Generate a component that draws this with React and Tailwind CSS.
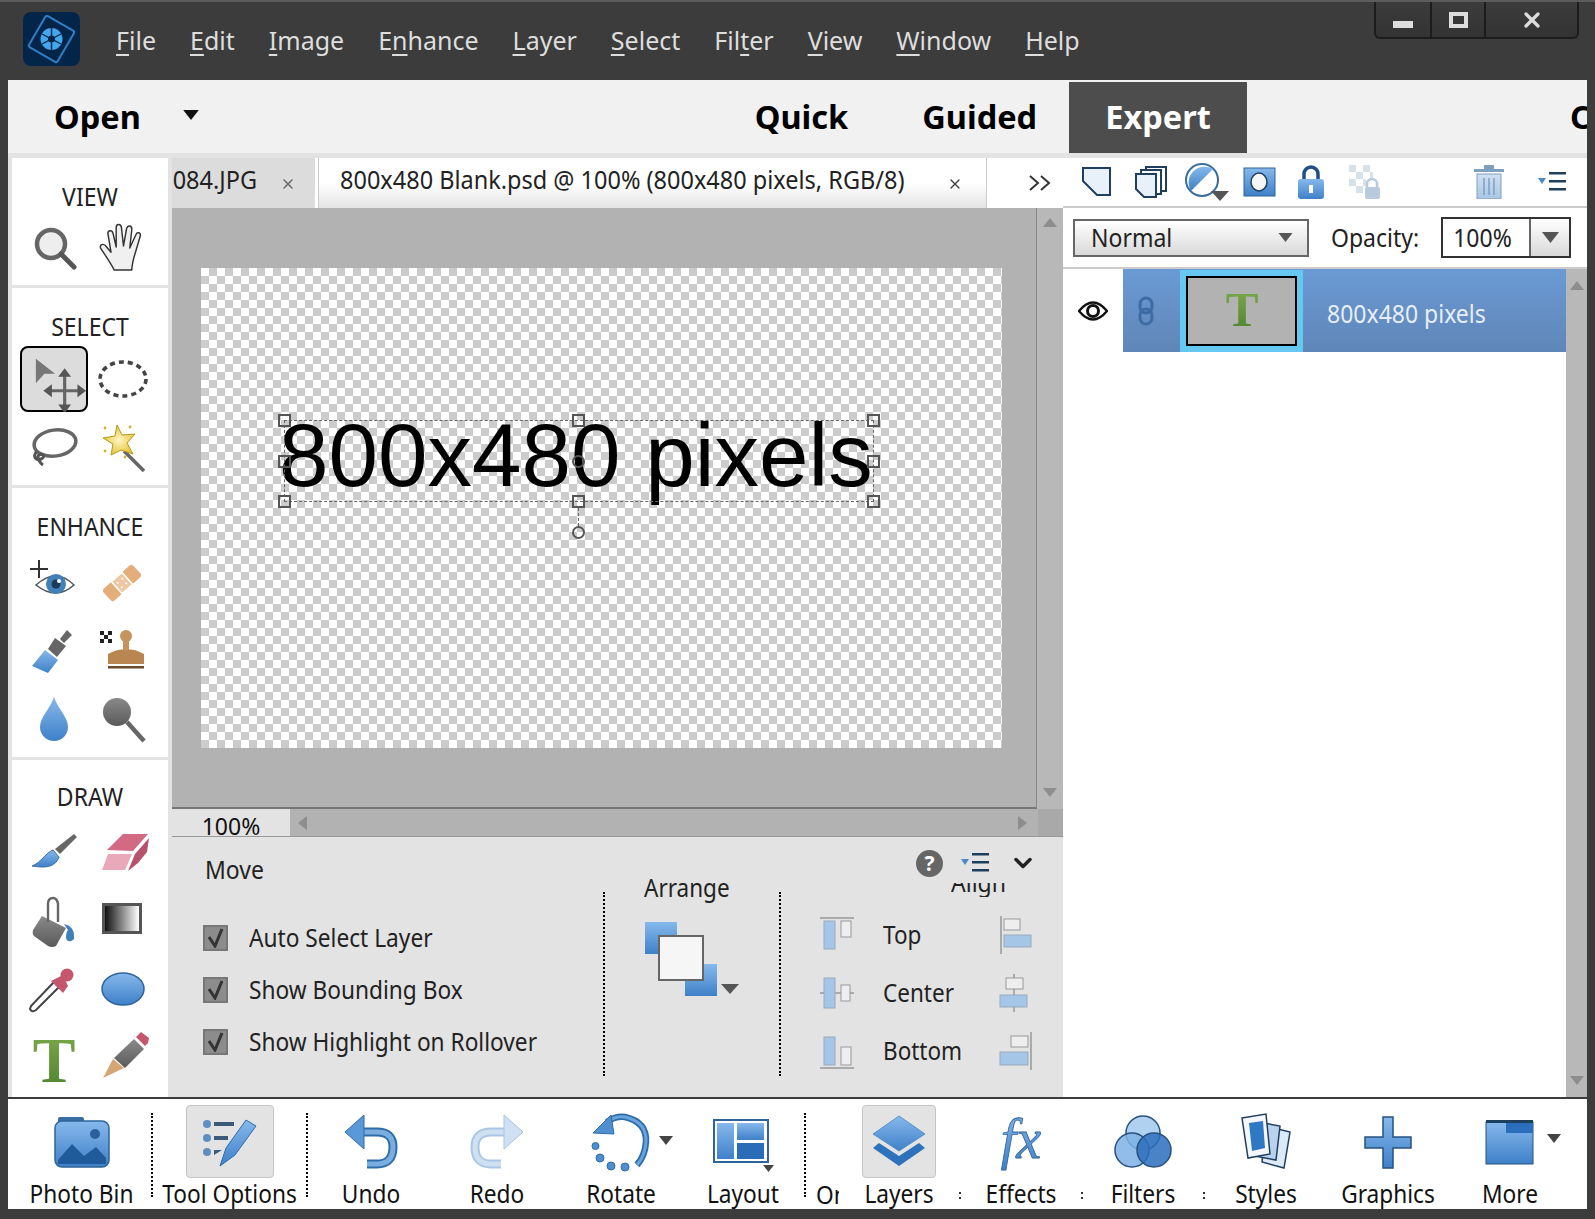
import React from 'react';
import { ChevronDown, X } from 'lucide-react';

const Tri = ({ w = 14, h = 9, fill = '#444' }) => (
  <svg width={w} height={h} viewBox="0 0 14 9"><polygon points="0,0 14,0 7,9" fill={fill} /></svg>
);

// shared gradients, referenced by every icon below
const Defs = () => (
  <svg className="absolute w-0 h-0">
    <defs>
      <linearGradient id="blue" x1="0" y1="0" x2="0" y2="1"><stop offset="0" stopColor="#86b9ec" /><stop offset="1" stopColor="#3f80c8" /></linearGradient>
      <linearGradient id="pale" x1="0" y1="0" x2="0" y2="1"><stop offset="0" stopColor="#cfe0f2" /><stop offset="1" stopColor="#a9c6e4" /></linearGradient>
      <linearGradient id="grey" x1="0" y1="0" x2="0" y2="1"><stop offset="0" stopColor="#8a8a8a" /><stop offset="1" stopColor="#5a5a5a" /></linearGradient>
      <linearGradient id="green" x1="0" y1="0" x2="0" y2="1"><stop offset="0" stopColor="#7fae4c" /><stop offset="1" stopColor="#4c7f2c" /></linearGradient>
      <linearGradient id="bw" x1="0" y1="0" x2="1" y2="0"><stop offset="0" stopColor="#111" /><stop offset="1" stopColor="#fff" /></linearGradient>
      <radialGradient id="star"><stop offset="0" stopColor="#fff6c8" /><stop offset="1" stopColor="#e6c73a" /></radialGradient>
    </defs>
  </svg>
);

const Ico = ({ s = 60, children }) => <svg width={s} height={s} viewBox="0 0 60 60">{children}</svg>;

const Zoom = () => <Ico><circle cx="27" cy="27" r="14" fill="#eee" stroke="#666" strokeWidth="4.5" /><line x1="37" y1="37" x2="50" y2="50" stroke="#555" strokeWidth="5" strokeLinecap="round" /></Ico>;
const HandTool = () => (
  <svg width="49" height="50" viewBox="0 0 46 48" className="ml-[3px]"><path d="M14 46 C10 38 4 30 1 25 C0 22 3 20 6 23 L11 29 L8 11 C8 8 12 7 13 11 L16 24 L16 5 C16 2 20 1 21 5 L23 23 L26 6 C27 3 31 3 31 7 L29 25 L35 12 C36 9 40 10 39 14 L33 34 C32 38 31 42 31 46 Z" fill="#f0f0f0" stroke="#333" strokeWidth="1.4" strokeLinejoin="round" /></svg>
);
const MoveTool = () => (
  <Ico s={66}>
    <polygon points="13,11 31,25 21,25 13,34" fill="#777" />
    <g stroke="#666" strokeWidth="3"><line x1="24" y1="41" x2="56" y2="41" /><line x1="40" y1="25" x2="40" y2="57" /></g>
    <g fill="#555"><polygon points="40,20 34,28 46,28" /><polygon points="40,62 34,54 46,54" /><polygon points="20,41 28,35 28,47" /><polygon points="60,41 52,35 52,47" /></g>
  </Ico>
);
const Marquee = () => <Ico><ellipse cx="31" cy="30" rx="23" ry="17" fill="none" stroke="#444" strokeWidth="3.6" strokeDasharray="5 4" /></Ico>;
const Lasso = () => <Ico><ellipse cx="31" cy="24" rx="21" ry="13" fill="none" stroke="#666" strokeWidth="3.5" transform="rotate(-8 31 24)" /><path d="M13 32 C8 38 12 42 17 40 C22 38 19 34 15 36 C12 38 16 44 19 46" fill="none" stroke="#555" strokeWidth="3" /></Ico>;
const Wand = () => <Ico><line x1="32" y1="32" x2="52" y2="52" stroke="#666" strokeWidth="3.5" /><polygon points="25,6 30,16 43,15 35,24 41,35 29,31 19,36 21,25 11,19 23,17" fill="url(#star)" stroke="#b59a1a" strokeWidth="1" /><g fill="#c9b43a"><circle cx="13" cy="9" r="1.4" /><circle cx="38" cy="8" r="1.4" /><circle cx="13" cy="32" r="1.4" /><circle cx="33" cy="38" r="1.4" /></g></Ico>;
const RedEye = () => <Ico><g stroke="#333" strokeWidth="2"><line x1="6" y1="16" x2="24" y2="16" /><line x1="15" y1="7" x2="15" y2="25" /></g><path d="M12 32 Q32 14 50 32 Q32 48 12 32Z" fill="#fff" stroke="#555" strokeWidth="1.5" /><circle cx="32" cy="31" r="10" fill="#3f80b8" /><circle cx="32" cy="31" r="4.5" fill="#1e3a55" /><circle cx="35" cy="28" r="2" fill="#fff" /></Ico>;
const Bandage = () => <Ico><g transform="rotate(-42 30 30)"><rect x="10" y="22" width="40" height="16" rx="3" fill="#e3ae7c" /><rect x="23" y="22" width="14" height="16" fill="#eec6a0" stroke="#fff" strokeWidth="1.5" /><g fill="#fff"><circle cx="27" cy="27" r="1" /><circle cx="33" cy="27" r="1" /><circle cx="27" cy="33" r="1" /><circle cx="33" cy="33" r="1" /></g></g></Ico>;
const SmartBrush = () => <Ico><polygon points="43,9 48,14 40,22 36,18" fill="#666" /><polygon points="31,17 42,25 33,36 24,28" fill="#666" /><polygon points="21,29 34,39 24,52 8,45" fill="url(#blue)" /></Ico>;
const Stamp = () => <Ico><g fill="#222"><rect x="8" y="10" width="4" height="4" /><rect x="16" y="10" width="4" height="4" /><rect x="12" y="14" width="4" height="4" /><rect x="8" y="18" width="4" height="4" /><rect x="16" y="18" width="4" height="4" /></g><circle cx="34" cy="15" r="6" fill="#c6925e" /><rect x="31" y="18" width="6" height="14" fill="#c6925e" /><path d="M16 33 Q30 26 34 30 Q38 26 52 33 V43 H16Z" fill="#b98652" /><rect x="16" y="45" width="36" height="2.5" fill="#6c4a2a" /></Ico>;
const Drop = () => <Ico><path d="M30 8 C34 20 44 28 44 38 A14 14 0 0 1 16 38 C16 28 26 20 30 8Z" fill="url(#blue)" /></Ico>;
const Sponge = () => <Ico><circle cx="25" cy="23" r="14" fill="url(#grey)" /><line x1="35" y1="33" x2="52" y2="52" stroke="#666" strokeWidth="4.5" /></Ico>;
const Brush = () => <Ico><polygon points="50,10 53,13 36,30 31,25" fill="#666" /><path d="M29 26 L35 33 C31 44 20 44 8 42 C18 38 20 30 29 26Z" fill="url(#blue)" stroke="#3a70a8" strokeWidth="1" /></Ico>;
const Eraser = () => <Ico><polygon points="15,26 31,10 56,10 41,27" fill="#d26a84" /><polygon points="10,46 16,30 40,30 33,46" fill="#eaa9b8" /><polygon points="36,47 43,30 57,14 55,28 46,39" fill="#b6536c" /></Ico>;
const Bucket = () => <Ico><path d="M18 24 L42 36 L32 54 Q28 56 24 54 L10 44 Q8 42 9 38Z" fill="url(#grey)" /><path d="M24 30 V12 Q24 6 29 6 Q33 6 34 12 V30" fill="none" stroke="#666" strokeWidth="2.4" /><path d="M40 32 Q50 34 50 44 A4 4 0 0 1 42 46 Q42 40 44 38" fill="#3f80b8" /></Ico>;
const GradientTool = () => <Ico><rect x="10" y="11" width="40" height="31" fill="#555" /><rect x="13" y="14" width="34" height="25" fill="url(#bw)" /></Ico>;
const Dropper = () => <Ico><path d="M35 27 L12 50 Q8 53 6 49 L7 46 L30 22Z" fill="#fff" stroke="#444" strokeWidth="2" /><polygon points="27,21 39,33 44,26 39,15" fill="#c4566e" /><circle cx="43" cy="15" r="6.5" fill="#c4566e" /></Ico>;
const Ellipse = () => <Ico><ellipse cx="31" cy="29" rx="21" ry="16" fill="url(#blue)" stroke="#2e6499" strokeWidth="1.5" /></Ico>;
const TypeT = ({ s = 60 }) => <Ico s={s}><text x="30" y="54" textAnchor="middle" fontFamily="'Liberation Serif', serif" fontWeight="700" fontSize="64" fill="url(#green)">T</text></Ico>;
const Pencil = () => <Ico><polygon points="11,50 21,31 32,40" fill="#d4a673" /><polygon points="22,30 42,11 52,21 33,40" fill="url(#grey)" /><polygon points="44,9 49,4 57,10 56,15 53,18" fill="#c4566e" /></Ico>;

const Tool = ({ selected, children }) => (
  <div className={selected ? 'w-[68px] h-[66px] flex items-center justify-center bg-[#dcdcdc] border-2 border-black rounded-lg' : 'w-[68px] h-[66px] flex items-center justify-center'}>{children}</div>
);

const ToolSection = ({ label, className, gridClass, children }) => (
  <div className={`ml-1 bg-white flex flex-col items-center w-[156px] ${className}`}>
    <div className="h-[30px] leading-[30px] text-[23px] text-[#222] scale-y-[1.12]">{label}</div>
    <div className={`grid grid-cols-[68px_68px] justify-items-center w-[136px] ml-[-4px] ${gridClass}`}>{children}</div>
  </div>
);

const Sep = () => <div className="h-[3px] bg-[#e3e3e3] shrink-0" />;

const Toolbox = () => (
  <div className="w-[164px] shrink-0 bg-[#e3e3e3] flex flex-col">
    <ToolSection label="VIEW" className="h-[127px] pt-[23px]" gridClass="mt-[3px]">
      <Tool><Zoom /></Tool>
      <Tool><HandTool /></Tool>
    </ToolSection>
    <Sep />
    <ToolSection label="SELECT" className="h-[197px] pt-[23px]" gridClass="mt-[5px] gap-y-[4px]">
      <Tool selected><MoveTool /></Tool>
      <Tool><Marquee /></Tool>
      <Tool><Lasso /></Tool>
      <Tool><Wand /></Tool>
    </ToolSection>
    <Sep />
    <ToolSection label="ENHANCE" className="h-[269px] pt-[23px]" gridClass="mt-[9px] gap-y-[2px]">
      <Tool><RedEye /></Tool>
      <Tool><Bandage /></Tool>
      <Tool><SmartBrush /></Tool>
      <Tool><Stamp /></Tool>
      <Tool><Drop /></Tool>
      <Tool><Sponge /></Tool>
    </ToolSection>
    <Sep />
    <ToolSection label="DRAW" className="flex-1 pt-[21px]" gridClass="mt-[10px] gap-y-[2px]">
      <Tool><Brush /></Tool>
      <Tool><Eraser /></Tool>
      <Tool><Bucket /></Tool>
      <Tool><GradientTool /></Tool>
      <Tool><Dropper /></Tool>
      <Tool><Ellipse /></Tool>
      <Tool><TypeT /></Tool>
      <Tool><Pencil /></Tool>
    </ToolSection>
  </div>
);

const Handle = ({ className }) => <div className={`absolute w-[13px] h-[13px] border-2 border-[#555] ${className}`} />;

const Canvas = () => (
  <div className="flex-1 flex min-h-0">
    <div className="flex-1 bg-[#b2b2b2] pt-[60px] pl-[29px] border-b-2 border-[#777] border-r border-r-[#888]">
      <div className="relative w-[801px] h-[480px] bg-[conic-gradient(#cccccc_25%,#ffffff_0_50%,#cccccc_0_75%,#ffffff_0)] bg-[length:16px_16px]">
        <span className="absolute left-[78px] top-[137px] text-[89px] leading-[100px] text-black whitespace-nowrap font-['Liberation_Sans',sans-serif]">800x480 pixels</span>
        <div className="absolute left-[83px] top-[152px] w-[590px] h-[82px] border border-dashed border-[#666]" />
        <Handle className="left-[77px] top-[146px]" />
        <Handle className="left-[371px] top-[146px]" />
        <Handle className="left-[666px] top-[146px]" />
        <Handle className="left-[77px] top-[187px]" />
        <Handle className="left-[666px] top-[187px]" />
        <Handle className="left-[77px] top-[227px]" />
        <Handle className="left-[371px] top-[227px]" />
        <Handle className="left-[666px] top-[227px]" />
        <div className="absolute left-[371px] top-[187px] w-[13px] h-[13px] rounded-full border-2 border-[#555]" />
        <div className="absolute left-[377px] top-[240px] w-px h-[18px] border-l border-dashed border-[#666]" />
        <div className="absolute left-[371px] top-[258px] w-[13px] h-[13px] rounded-full border-2 border-[#555]" />
      </div>
    </div>
    <div className="w-[26px] shrink-0 bg-[#b8b8b8] flex flex-col items-center justify-between py-[10px] border-b-2 border-[#b8b8b8]">
      <svg width="14" height="9" viewBox="0 0 14 9"><polygon points="0,9 14,9 7,0" fill="#8d8d8d" /></svg>
      <Tri fill="#8d8d8d" />
    </div>
  </div>
);

const Tabs = () => (
  <div className="h-[50px] shrink-0 flex bg-white text-[23.5px] text-[#222]">
    <div className="w-[143px] bg-[#dcdcdc] flex items-center justify-end pr-[19px] pb-[6px] gap-[23px] overflow-hidden">
      <span className="scale-y-[1.12] shrink-0">3084.JPG</span>
      <X size={16} color="#666" className="shrink-0 mt-[8px]" />
    </div>
    <div className="w-[3px] bg-white" />
    <div className="w-[668px] bg-gradient-to-b from-white from-50% to-[#e4e4e4] border-l border-[#ccc] flex items-center pl-[21px] pb-[6px]">
      <span className="scale-y-[1.12] whitespace-nowrap">800x480 Blank.psd @ 100% (800x480 pixels, RGB/8)</span>
      <X size={16} color="#444" className="ml-auto mr-[23px] mt-[8px]" />
    </div>
    <div className="flex-1 flex items-center justify-end pr-[10px] border-l border-[#ccc]">
      <svg width="24" height="16" viewBox="0 0 24 16"><path d="M1 1 L9 8 L1 15 M12 1 L20 8 L12 15" fill="none" stroke="#333" strokeWidth="2" /></svg>
    </div>
  </div>
);

const CheckRow = ({ children }) => (
  <div className="flex items-center gap-[21px] h-[26px]">
    <div className="w-[25px] h-[26px] bg-[#8c8c8c] border-2 border-[#777] flex items-center justify-center">
      <svg width="19" height="20" viewBox="0 0 19 20"><path d="M3 9 L9 18 L16 1" fill="none" stroke="#333" strokeWidth="3" /></svg>
    </div>
    <span className="text-[22.7px] text-[#222] scale-y-[1.12] whitespace-nowrap">{children}</span>
  </div>
);

const AlignIcon = ({ kind }) => (
  <svg width="34" height="38" viewBox="0 0 34 38">
    {kind === 'top' && <><line x1="0" y1="2" x2="34" y2="2" stroke="#aaa" strokeWidth="2" /><rect x="4" y="5" width="11" height="28" fill="#a6c6e8" stroke="#9ab" /><rect x="21" y="5" width="10" height="16" fill="#eee" stroke="#999" /></>}
    {kind === 'mid' && <><line x1="0" y1="19" x2="34" y2="19" stroke="#aaa" strokeWidth="2" /><rect x="4" y="4" width="11" height="30" fill="#a6c6e8" stroke="#9ab" /><rect x="21" y="11" width="9" height="16" fill="#eee" stroke="#999" /></>}
    {kind === 'bottom' && <><line x1="0" y1="36" x2="34" y2="36" stroke="#aaa" strokeWidth="2" /><rect x="4" y="5" width="11" height="28" fill="#a6c6e8" stroke="#9ab" /><rect x="21" y="15" width="10" height="18" fill="#eee" stroke="#999" /></>}
    {kind === 'left' && <><line x1="2" y1="0" x2="2" y2="38" stroke="#aaa" strokeWidth="2" /><rect x="5" y="3" width="16" height="11" fill="#eee" stroke="#999" /><rect x="5" y="19" width="27" height="12" fill="#a6c6e8" stroke="#9ab" /></>}
    {kind === 'cen' && <><line x1="15" y1="0" x2="15" y2="38" stroke="#aaa" strokeWidth="2" /><rect x="7" y="4" width="17" height="11" fill="#eee" stroke="#999" /><rect x="1" y="21" width="27" height="12" fill="#a6c6e8" stroke="#9ab" /></>}
    {kind === 'right' && <><line x1="32" y1="0" x2="32" y2="38" stroke="#aaa" strokeWidth="2" /><rect x="12" y="4" width="17" height="11" fill="#eee" stroke="#999" /><rect x="1" y="20" width="28" height="13" fill="#a6c6e8" stroke="#9ab" /></>}
  </svg>
);

const AlignRow = ({ l, r, children }) => (
  <div className="flex items-center h-[38px]">
    <AlignIcon kind={l} />
    <span className="w-[145px] pl-[29px] text-[22.5px] text-[#222] scale-y-[1.12]">{children}</span>
    <AlignIcon kind={r} />
  </div>
);

const MenuLines = ({ color = '#1f3f5f' }) => (
  <svg width="30" height="24" viewBox="0 0 30 24">
    <polygon points="0,8 8,8 4,14" fill="#4a8ac8" />
    <g fill={color}><rect x="11" y="2" width="17" height="2.5" /><rect x="11" y="10" width="17" height="2.5" /><rect x="11" y="18" width="17" height="2.5" /></g>
  </svg>
);

const Options = () => (
  <div className="relative h-[260px] shrink-0 bg-[#e3e3e3] flex text-[23px] text-[#222]">
    <div className="w-[431px] pl-[33px] pt-[17px]">
      <div className="h-[30px] leading-[30px] scale-y-[1.12] origin-left w-fit">Move</div>
      <div className="mt-[41px] ml-[-2px] flex flex-col gap-[26px]">
        <CheckRow>Auto Select Layer</CheckRow>
        <CheckRow>Show Bounding Box</CheckRow>
        <CheckRow>Show Highlight on Rollover</CheckRow>
      </div>
    </div>
    <div className="w-[176px] h-[184px] mt-[55px] border-l-2 border-dotted border-black">
      <div className="h-[30px] leading-[30px] ml-[39px] mt-[-19px] text-[22.5px] scale-y-[1.12] w-fit">Arrange</div>
      <svg width="100" height="80" viewBox="0 0 100 80" className="ml-[40px] mt-[19px]">
        <rect x="0" y="0" width="32" height="32" fill="url(#blue)" />
        <rect x="40" y="42" width="32" height="32" fill="url(#blue)" />
        <rect x="14" y="14" width="44" height="44" fill="#f6f6f6" stroke="#666" strokeWidth="2" />
        <polygon points="76,62 94,62 85,72" fill="#555" />
      </svg>
    </div>
    <div className="flex-1 h-[184px] mt-[55px] border-l-2 border-dotted border-black relative">
      <div className="h-[14px] overflow-hidden ml-[170px] mt-[-9px] flex items-end">
        <span className="leading-[30px] scale-y-[1.12] whitespace-nowrap block">Align</span>
      </div>
      <div className="mt-[19px] ml-[39px] flex flex-col gap-[20px]">
        <AlignRow l="top" r="left">Top</AlignRow>
        <AlignRow l="mid" r="cen">Center</AlignRow>
        <AlignRow l="bottom" r="right">Bottom</AlignRow>
      </div>
    </div>
    <div className="absolute right-[26px] top-[12px] flex items-center gap-[18px]">
      <div className="w-[27px] h-[27px] rounded-full bg-[#666] flex items-center justify-center text-white font-bold text-[21px] leading-none">?</div>
      <MenuLines />
      <ChevronDown size={28} strokeWidth={3} color="#222" />
    </div>
  </div>
);

const PanelIcons = () => (
  <div className="h-[50px] shrink-0 flex items-center bg-white border-b-2 border-[#ccc] pl-[19px] relative">
    <svg width="30" height="30" viewBox="0 0 30 30"><path d="M1 1 H28 V28 H15 L1 14Z" fill="#e8f1fa" stroke="#1f3f5f" strokeWidth="2" /></svg>
    <svg width="34" height="32" viewBox="0 0 34 32" className="ml-[23px]"><rect x="11" y="1" width="20" height="24" fill="#fff" stroke="#1f3f5f" strokeWidth="2" /><rect x="6" y="4" width="20" height="24" fill="#fff" stroke="#1f3f5f" strokeWidth="2" /><path d="M1 8 H21 V31 H9 L1 23Z" fill="#e8f1fa" stroke="#1f3f5f" strokeWidth="2" /></svg>
    <svg width="46" height="38" viewBox="0 0 46 38" className="ml-[15px]"><circle cx="18" cy="17" r="16" fill="#fff" stroke="#3a6da0" strokeWidth="2" /><path d="M7 28 A16 16 0 0 1 29 6Z" fill="url(#blue)" /><polygon points="27,28 45,28 36,38" fill="#555" /></svg>
    <svg width="33" height="32" viewBox="0 0 33 32" className="ml-[13px]"><rect x="1" y="2" width="31" height="28" fill="url(#blue)" stroke="#2e6499" /><ellipse cx="16" cy="16" rx="8" ry="9" fill="#f6f6f6" stroke="#1f3f5f" strokeWidth="1.5" /></svg>
    <svg width="28" height="36" viewBox="0 0 28 36" className="ml-[21px]"><path d="M7 16 V10 A7 7 0 0 1 21 10 V16" fill="none" stroke="#1f4f86" strokeWidth="3.5" /><rect x="1" y="15" width="26" height="20" rx="3" fill="url(#blue)" /><rect x="12" y="21" width="4" height="8" fill="#fff" /></svg>
    <svg width="34" height="36" viewBox="0 0 34 36" className="ml-[23px]" opacity="0.55"><g fill="#b8c9da"><rect x="1" y="1" width="7" height="7" /><rect x="15" y="1" width="7" height="7" /><rect x="8" y="8" width="7" height="7" /><rect x="22" y="8" width="3" height="7" /><rect x="1" y="15" width="7" height="7" /><rect x="15" y="15" width="3" height="7" /><rect x="8" y="22" width="7" height="7" /></g><path d="M19 24 V20 A5 5 0 0 1 29 20 V24" fill="none" stroke="#7f9fbf" strokeWidth="2.5" /><rect x="17" y="23" width="15" height="12" rx="2" fill="#7f9fbf" /></svg>
    <svg width="30" height="34" viewBox="0 0 30 34" className="ml-auto mr-[34px]"><rect x="0" y="4" width="30" height="3" fill="#7f9fbf" /><rect x="10" y="0" width="10" height="4" fill="#7f9fbf" /><rect x="3" y="9" width="24" height="25" fill="url(#pale)" stroke="#7f9fbf" /><g stroke="#7f9fbf" strokeWidth="1.5"><line x1="10" y1="13" x2="10" y2="30" /><line x1="15" y1="13" x2="15" y2="30" /><line x1="20" y1="13" x2="20" y2="30" /></g></svg>
    <div className="mr-[19px]"><MenuLines /></div>
  </div>
);

const BlendRow = () => (
  <div className="h-[61px] shrink-0 bg-white border-b-2 border-[#ccc] flex items-center pl-[10px] text-[23px] text-[#222]">
    <div className="w-[236px] h-[38px] border-2 border-[#666] bg-gradient-to-b from-white to-[#d9d9d9] flex items-center pl-[16px] pr-[14px] justify-between">
      <span className="scale-y-[1.12]">Normal</span>
      <Tri w={15} h={9} fill="#555" />
    </div>
    <span className="ml-[22px] scale-y-[1.12]">Opacity:</span>
    <div className="ml-[22px] w-[130px] h-[41px] border-2 border-[#333] flex items-center">
      <span className="flex-1 pl-[10px] scale-y-[1.12]">100%</span>
      <div className="w-[40px] h-full border-l-2 border-[#666] bg-gradient-to-b from-white to-[#d9d9d9] flex items-center justify-center"><Tri w={19} h={11} fill="#555" /></div>
    </div>
  </div>
);

const LayerList = () => (
  <div className="flex-1 flex bg-white min-h-0">
    <div className="flex-1 flex items-start">
      <div className="w-[60px] h-[83px] flex items-center justify-center">
        <svg width="30" height="22" viewBox="0 0 30 22"><path d="M1 11 Q15 -6 29 11 Q15 28 1 11Z" fill="#fff" stroke="#111" strokeWidth="2.4" /><circle cx="15" cy="11" r="5.5" fill="#fff" stroke="#111" strokeWidth="3" /></svg>
      </div>
      <div className="flex-1 h-[83px] bg-gradient-to-b from-[#6b9ad4] to-[#5f86b8] flex items-center">
        <svg width="22" height="30" viewBox="0 0 22 30" className="ml-[12px]"><g fill="none" stroke="#3d6ba5" strokeWidth="3"><rect x="5" y="2" width="12" height="15" rx="6" /><rect x="5" y="13" width="12" height="15" rx="6" /></g></svg>
        <div className="ml-[23px] w-[123px] h-[82px] border-[6px] border-[#64c8f0] bg-[#b2b2b2] outline-2 outline-offset-[-8px] outline-black flex items-center justify-center pb-[6px]">
          <TypeT s={46} />
        </div>
        <span className="ml-[24px] mt-[6px] text-[23px] text-[#e8eef6] scale-y-[1.12] whitespace-nowrap">800x480 pixels</span>
      </div>
    </div>
    <div className="w-[21px] bg-[#b8b8b8] flex flex-col items-center justify-between py-[12px]">
      <svg width="14" height="9" viewBox="0 0 14 9"><polygon points="0,9 14,9 7,0" fill="#8d8d8d" /></svg>
      <Tri fill="#8d8d8d" />
    </div>
  </div>
);

const Undo = ({ flip, pale }) => (
  <Ico>
    <g transform={flip ? 'translate(60 0) scale(-1 1)' : undefined}>
      <path d="M18 20 H36 Q52 20 52 35 Q52 52 36 52 H26" fill="none" stroke={pale ? '#a9c6e4' : '#2e6da8'} strokeWidth="9" />
      <path d="M18 20 H36 Q52 20 52 35 Q52 52 36 52 H26" fill="none" stroke={pale ? '#cfe0f2' : '#7aaee0'} strokeWidth="5" />
      <polygon points="4,20 23,3 23,37" fill={pale ? '#cfe0f2' : '#5a98d8'} stroke={pale ? '#a9c6e4' : '#2e6da8'} />
    </g>
  </Ico>
);

const BarItem = ({ w, label, active, box = 'w-[88px]', icon }) => (
  <div className={`${w} shrink-0 flex flex-col items-center`}>
    <div className={active ? `mt-[6px] ${box} h-[74px] flex items-center justify-center bg-[#e3e3e3] border border-[#c4c4c4] rounded` : `mt-[6px] ${box} h-[74px] flex items-center justify-center`}>{icon}</div>
    <span className="text-[22.7px] leading-[30px] mt-[1px] text-[#111] scale-y-[1.12] whitespace-nowrap">{label}</span>
  </div>
);

const VSep = () => <div className="h-[84px] w-0 mt-[14px] border-l-2 border-dotted border-black shrink-0" />;
const Tick = () => <div className="h-[7px] w-0 mt-[93px] border-l-2 border-dotted border-[#333] shrink-0" />;

const BottomBar = () => (
  <div className="h-[110px] shrink-0 mt-[2px] bg-white flex pl-[4px] overflow-hidden">
    <BarItem w="w-[139px]" label="Photo Bin" icon={<Ico><rect x="6" y="5" width="26" height="6" rx="2" fill="#3a6da0" /><rect x="3" y="9" width="54" height="46" rx="7" fill="url(#blue)" stroke="#2e6499" strokeWidth="1.5" /><circle cx="43" cy="22" r="5" fill="#2a5f9c" /><polygon points="6,48 20,32 32,44 44,35 54,46 54,52 6,52" fill="#1f5a9a" /></Ico>} />
    <VSep />
    <BarItem w="w-[153px]" label="Tool Options" active icon={<Ico><g fill="#5f8fbf"><circle cx="7" cy="12" r="4" /><circle cx="7" cy="26" r="4" /><circle cx="7" cy="40" r="4" /></g><g fill="#3d5a7a"><rect x="14" y="10" width="20" height="4" /><rect x="14" y="24" width="14" height="4" /><polygon points="14,38 22,38 14,43" /></g><polygon points="20,54 26,36 46,8 56,14 35,43" fill="url(#blue)" stroke="#2e6da8" /></Ico>} />
    <VSep />
    <BarItem w="w-[126px]" label="Undo" icon={<Undo />} />
    <BarItem w="w-[126px]" label="Redo" icon={<Undo flip pale />} />
    <BarItem w="w-[122px]" label="Rotate" icon={<div className="relative"><Ico><path d="M16 10 Q24 4 34 5 Q56 10 55 30 Q54 44 46 53" fill="none" stroke="#2e6da8" strokeWidth="6.5" /><path d="M16 10 Q24 4 34 5 Q56 10 55 30 Q54 44 46 53" fill="none" stroke="#6aa4dc" strokeWidth="3" /><polygon points="2,21 20,3 23,22" fill="#4f8fd0" stroke="#2e6da8" /><g fill="#4f8fd0" stroke="#2e6da8"><circle cx="4.5" cy="34" r="3.5" /><circle cx="9" cy="46" r="4" /><circle cx="20" cy="54" r="4" /><circle cx="34" cy="55" r="4" /></g></Ico><div className="absolute left-[68px] top-[24px]"><Tri /></div></div>} />
    <BarItem w="w-[122px]" label="Layout" icon={<div className="relative"><Ico><rect x="1" y="8" width="54" height="42" fill="#fff" stroke="#2e6499" strokeWidth="2" /><rect x="4" y="11" width="17" height="36" fill="url(#blue)" /><rect x="24" y="11" width="27" height="17" fill="url(#blue)" /><rect x="24" y="31" width="27" height="16" fill="#2a6cb8" /></Ico><div className="absolute left-[50px] top-[53px]"><Tri w={11} h={7} /></div></div>} />
    <VSep />
    <div className="w-[33px] shrink-0 overflow-hidden pt-[81px] pl-[10px]"><span className="text-[22.7px] leading-[30px] text-[#111] scale-y-[1.12] block whitespace-nowrap">On</span></div>
    <BarItem w="w-[120px]" label="Layers" active box="w-[74px]" icon={<Ico><polygon points="30,4 56,22 30,39 4,22" fill="url(#blue)" stroke="#5a90c8" /><polygon points="4,36 10,31 30,44 50,31 56,36 30,54" fill="#2f72bc" /></Ico>} />
    <Tick />
    <BarItem w="w-[120px]" label="Effects" icon={<svg width="60" height="60" viewBox="0 0 60 60"><text x="30" y="46" textAnchor="middle" fontFamily="'Liberation Serif', serif" fontStyle="italic" fontSize="56" fill="url(#blue)" stroke="#2e6499" strokeWidth="0.8">fx</text></svg>} />
    <Tick />
    <BarItem w="w-[120px]" label="Filters" icon={<Ico><g stroke="#27527f" strokeWidth="1.5"><circle cx="30" cy="21" r="17" fill="#a8ccf0" fillOpacity="0.9" /><circle cx="19" cy="38" r="17" fill="#7fb2e6" fillOpacity="0.85" /><circle cx="41" cy="38" r="17" fill="#2b6fbc" fillOpacity="0.85" /></g></Ico>} />
    <Tick />
    <BarItem w="w-[122px]" label="Styles" icon={<Ico><polygon points="30,14 54,20 48,56 26,50" fill="#dceaf8" stroke="#1f3f5f" strokeWidth="1.5" /><polygon points="22,10 44,14 40,48 18,44" fill="#b9d3ee" stroke="#1f3f5f" strokeWidth="1.5" /><polygon points="6,6 30,2 34,42 12,46" fill="#f4f8fc" stroke="#1f3f5f" strokeWidth="1.5" /><polygon points="13,11 27,9 29,36 16,39" fill="#2f78c4" /></Ico>} />
    <BarItem w="w-[122px]" label="Graphics" icon={<Ico><path d="M25 5 H35 V25 H53 V36 H35 V56 H25 V36 H7 V25 H25Z" fill="url(#blue)" stroke="#27527f" strokeWidth="1.5" /></Ico>} />
    <BarItem w="w-[122px]" label="More" icon={<div className="relative"><Ico><rect x="6" y="10" width="47" height="42" fill="url(#blue)" stroke="#27527f" /><rect x="26" y="10" width="27" height="11" fill="#2b6fbc" /><rect x="6" y="8" width="47" height="3" fill="#1f3f5f" /></Ico><div className="absolute left-[67px] top-[22px]"><Tri /></div></div>} />
  </div>
);

const MenuItem = ({ pre = '', u, post }) => (
  <span>{pre}<u className="underline-offset-[4px]">{u}</u>{post}</span>
);

const TitleBar = () => (
  <div className="h-[78px] shrink-0 flex relative font-['Noto_Sans',sans-serif]">
    <svg width="57" height="54" viewBox="0 0 57 54" className="ml-[23px] mt-[10px]">
      <rect width="57" height="54" rx="8" fill="#04254a" />
      <rect x="12" y="9" width="33" height="36" rx="2" fill="none" stroke="#2f7fc4" strokeWidth="2" transform="rotate(30 28.5 27)" />
      <circle cx="28.5" cy="27" r="11" fill="#44a6ee" />
      <g stroke="#04254a" strokeWidth="1.4"><line x1="28.5" y1="27" x2="28.5" y2="16" /><line x1="28.5" y1="27" x2="38" y2="22" /><line x1="28.5" y1="27" x2="38" y2="32" /><line x1="28.5" y1="27" x2="28.5" y2="38" /><line x1="28.5" y1="27" x2="19" y2="32" /><line x1="28.5" y1="27" x2="19" y2="22" /></g>
      <circle cx="28.5" cy="27" r="3.5" fill="#04254a" />
    </svg>
    <div className="ml-[36px] mt-[20px] flex gap-[34px] text-[25px] text-[#dedede] leading-[36px] h-fit">
      <MenuItem u="F" post="ile" />
      <MenuItem u="E" post="dit" />
      <MenuItem u="I" post="mage" />
      <MenuItem pre="E" u="n" post="hance" />
      <MenuItem u="L" post="ayer" />
      <MenuItem u="S" post="elect" />
      <MenuItem pre="Fil" u="t" post="er" />
      <MenuItem u="V" post="iew" />
      <MenuItem u="W" post="indow" />
      <MenuItem u="H" post="elp" />
    </div>
    <div className="ml-auto mr-[16px] w-[205px] h-[37px] border-2 border-t-0 border-[#1c1c1c] rounded-b-md flex bg-gradient-to-b from-[#3c3c3c] to-[#333]">
      <div className="w-[56px] flex items-center justify-center border-r-2 border-[#1c1c1c]"><div className="w-[20px] h-[7px] bg-[#ddd] mt-[10px]" /></div>
      <div className="w-[54px] flex items-center justify-center border-r-2 border-[#1c1c1c]"><div className="w-[19px] h-[16px] border-[4px] border-[#ddd]" /></div>
      <div className="flex-1 flex items-center justify-center"><X size={24} strokeWidth={3.2} color="#ddd" /></div>
    </div>
  </div>
);

const ModeBar = () => (
  <div className="h-[75px] shrink-0 bg-[#f1f1f1] flex text-[32.5px] font-bold text-black overflow-hidden border-b-2 border-[#e3e3e3]">
    <span className="ml-[46px] mt-[15px] leading-[44px]">Open</span>
    <div className="ml-[42px] mt-[30px]"><Tri w={16} h={10} fill="#111" /></div>
    <span className="ml-[556px] mt-[15px] leading-[44px]">Quick</span>
    <span className="ml-[74px] mt-[15px] leading-[44px]">Guided</span>
    <div className="ml-[32px] mt-[2px] w-[178px] h-[73px] bg-[#4d4d4d] text-white flex items-center justify-center pb-[2px]">Expert</div>
    <span className="ml-[323px] mt-[15px] leading-[44px] w-[17px] overflow-hidden">C</span>
  </div>
);

export default function App() {
  return (
    <div className="w-[1595px] h-[1219px] overflow-hidden bg-[#3c3c3c] border-t-2 border-[#5c5c5c] flex flex-col font-['Noto_Sans',sans-serif]">
      <Defs />
      <TitleBar />
      <div className="ml-[8px] mr-[8px] mb-[10px] flex-1 flex flex-col min-h-0 rounded-t-sm">
        <ModeBar />
        <div className="h-[3px] shrink-0 bg-[#e3e3e3]" />
        <div className="flex-1 flex min-h-0">
          <Toolbox />
          <div className="w-[891px] shrink-0 flex flex-col border-l-0 min-h-0">
            <Tabs />
            <Canvas />
            <div className="h-[28px] shrink-0 bg-[#b2b2b2] flex items-center border-b border-[#999]">
              <div className="w-[118px] h-full bg-[#e3e3e3] overflow-hidden text-center text-[23px] leading-[34px] text-[#111]">100%</div>
              <div className="ml-[8px]"><svg width="9" height="14" viewBox="0 0 9 14"><polygon points="9,0 9,14 0,7" fill="#8d8d8d" /></svg></div>
              <div className="ml-auto mr-[11px]"><svg width="9" height="14" viewBox="0 0 9 14"><polygon points="0,0 0,14 9,7" fill="#8d8d8d" /></svg></div>
              <div className="w-[25px] h-full bg-[#a9a9a9]" />
            </div>
            <Options />
          </div>
          <div className="flex-1 flex flex-col min-w-0">
            <PanelIcons />
            <BlendRow />
            <LayerList />
          </div>
        </div>
        <BottomBar />
      </div>
    </div>
  );
}
